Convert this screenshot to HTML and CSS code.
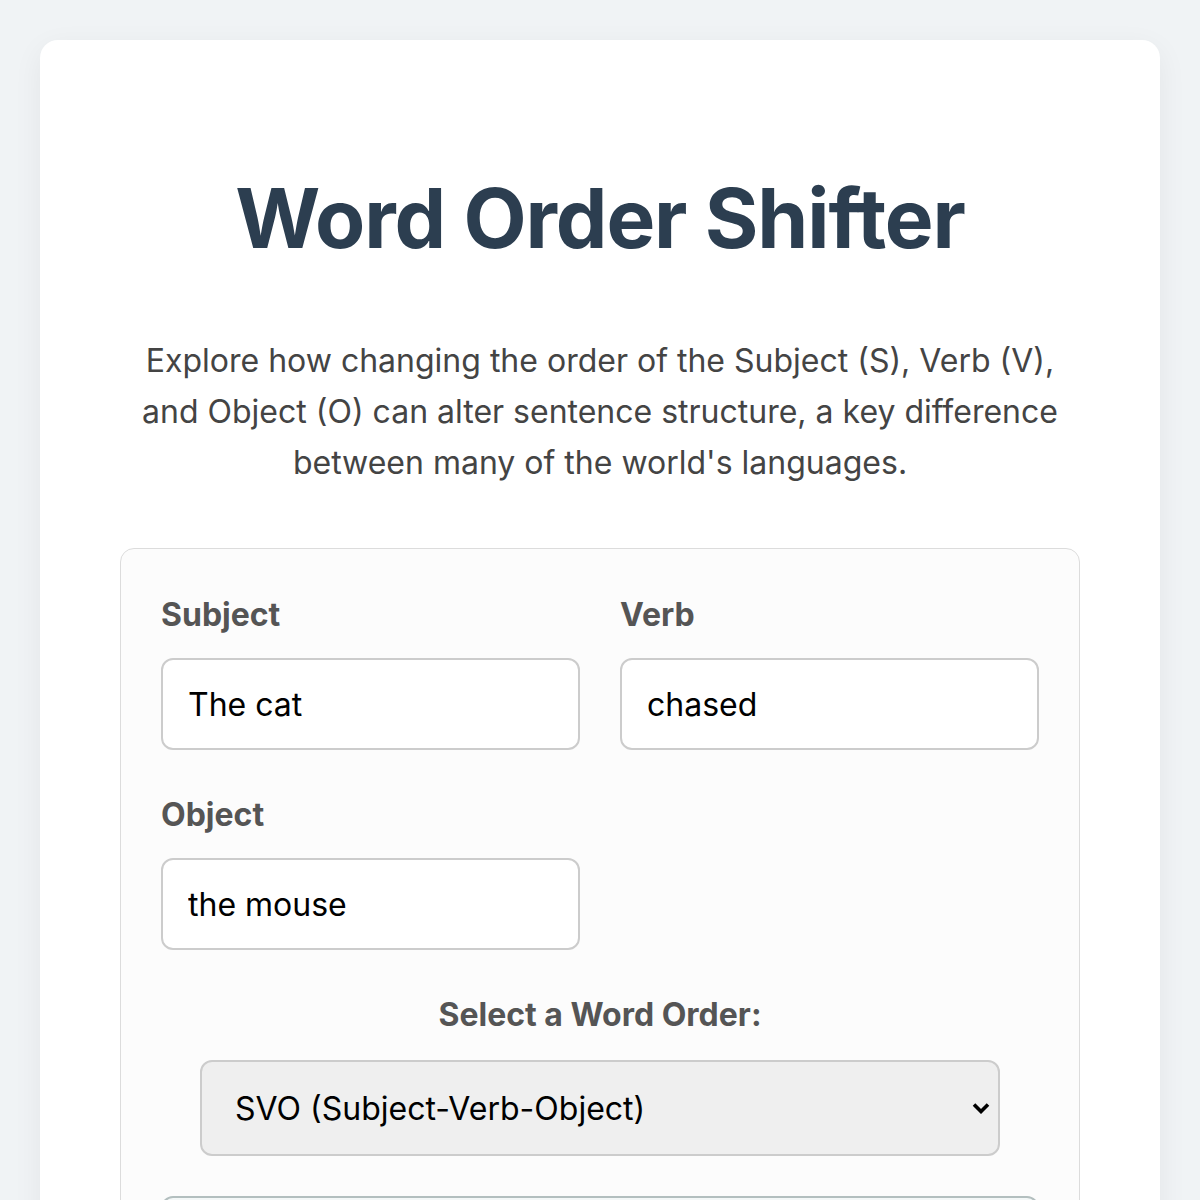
FILE: index.html
```html
<!DOCTYPE html>
<html lang="en">
<head>
<meta charset="utf-8">
<title>Word Order Shifter</title>
<link rel="stylesheet" href="styles.css">
</head>
<body>
<main class="card">
  <h1 class="title">Word Order Shifter</h1>
  <p class="intro">Explore how changing the order of the Subject (S), Verb (V), and Object (O) can alter sentence structure, a key difference between many of the world's languages.</p>
  <section class="panel">
    <div class="fields">
      <div class="field">
        <label class="label" for="subject">Subject</label>
        <input class="input" id="subject" type="text" value="The cat">
      </div>
      <div class="field">
        <label class="label" for="verb">Verb</label>
        <input class="input" id="verb" type="text" value="chased">
      </div>
      <div class="field">
        <label class="label" for="object">Object</label>
        <input class="input" id="object" type="text" value="the mouse">
      </div>
    </div>
    <div class="order">
      <label class="label order-label" for="order">Select a Word Order:</label>
      <div class="select-wrap">
        <select class="select" id="order">
          <option>SVO (Subject-Verb-Object)</option>
          <option>SOV (Subject-Object-Verb)</option>
          <option>VSO (Verb-Subject-Object)</option>
          <option>VOS (Verb-Object-Subject)</option>
          <option>OVS (Object-Verb-Subject)</option>
          <option>OSV (Object-Subject-Verb)</option>
        </select>
        <svg class="chevron" width="18" height="12" viewBox="0 0 18 12" aria-hidden="true">
          <path d="M2 2.5 L9 9.5 L16 2.5" fill="none" stroke="#000" stroke-width="3.6" stroke-linecap="butt" stroke-linejoin="miter"/>
        </svg>
      </div>
    </div>
    <div class="result">The cat chased the mouse.</div>
  </section>
</main>
</body>
</html>
```
FILE: styles.css
```css
* { box-sizing: border-box; }
html, body { margin: 0; padding: 0; }
body {
  background: #f0f3f5;
  font-family: Inter, "Noto Sans", sans-serif;
  padding: 40px;
}
.card {
  background: #ffffff;
  border-radius: 18px;
  box-shadow: 0 8px 30px rgba(0, 0, 0, 0.06);
  padding: 130px 80px 80px;
}
.title {
  margin: 0;
  text-align: center;
  color: #2c3e50;
  font-size: 82px;
  font-weight: 700;
  line-height: 97px;
  letter-spacing: -1.1px;
}
.intro {
  margin: 68px 0 60px;
  text-align: center;
  color: #444;
  font-size: 32px;
  line-height: 51px;
}
.panel {
  background: #fcfcfc;
  border: 1.5px solid #dcdcdc;
  border-radius: 14px;
  padding: 46px 40px 40px;
}
.fields {
  display: grid;
  grid-template-columns: minmax(0, 1fr) minmax(0, 1fr);
  column-gap: 40px;
  row-gap: 45px;
}
.field { display: flex; flex-direction: column; min-width: 0; }
.label {
  display: block;
  color: #555;
  font-weight: 700;
  font-size: 32px;
  line-height: 39px;
  margin-bottom: 24px;
}
.input {
  width: 100%;
  height: 92px;
  border: 2px solid #ccc;
  border-radius: 12px;
  background: #fff;
  padding: 0 25px;
  font-family: Inter, "Noto Sans", sans-serif;
  font-size: 32px;
  color: #000;
}
.order {
  margin-top: 45px;
  display: flex;
  flex-direction: column;
  align-items: center;
}
.order-label { margin-bottom: 26px; }
.select-wrap {
  position: relative;
  width: 800px;
}
.select {
  -webkit-appearance: none;
  appearance: none;
  display: block;
  width: 100%;
  height: 96px;
  border: 2px solid #ccc;
  border-radius: 12px;
  background-color: #efefef;
  padding: 0 60px 0 33px;
  font-family: Inter, "Noto Sans", sans-serif;
  font-size: 32px;
  color: #000;
}
.chevron {
  position: absolute;
  right: 10px;
  top: 42px;
  pointer-events: none;
}
.result {
  margin-top: 40px;
  border: 2px solid #b3bfbf;
  border-radius: 12px;
  background: #f4f8f8;
  padding: 36px;
  font-size: 36px;
  text-align: center;
  color: #2c3e50;
}
```
